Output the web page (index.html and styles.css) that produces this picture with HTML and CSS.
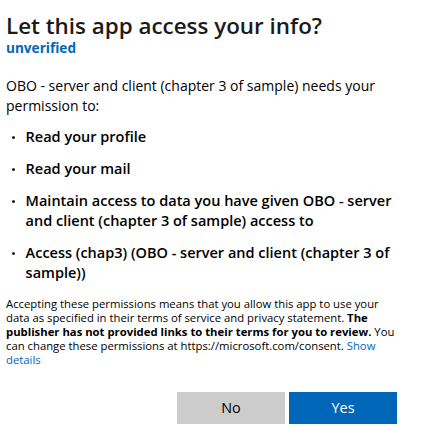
FILE: index.html
```html
<!DOCTYPE html>
<html lang="en">
<head>
<meta charset="utf-8">
<title>Permissions requested</title>
<link rel="stylesheet" href="styles.css">
</head>
<body>
<main class="consent">
  <header class="consent-head">
    <h1 class="title">Let this app access your info?</h1>
    <div class="badge">unverified</div>
  </header>
  <p class="intro">OBO - server and client (chapter 3 of sample) needs your permission to:</p>
  <ul class="scopes">
    <li class="scope">Read your profile</li>
    <li class="scope">Read your mail</li>
    <li class="scope">Maintain access to data you have given OBO - server and client (chapter 3 of sample) access to</li>
    <li class="scope">Access (chap3) (OBO - server and client (chapter 3 of sample))</li>
  </ul>
  <p class="legal">Accepting these permissions means that you allow this app to use your data as specified in their terms of service and privacy statement. <strong>The publisher has not provided links to their terms for you to review.</strong> You can change these permissions at https://microsoft.com/consent. <a class="link" href="#">Show details</a></p>
  <div class="actions">
    <button class="btn btn-secondary" type="button">No</button>
    <button class="btn btn-primary" type="button">Yes</button>
  </div>
</main>
</body>
</html>
```
FILE: styles.css
```css
html, body {
  margin: 0;
  padding: 0;
  background: #ffffff;
}
body {
  font-family: "Open Sans", "Noto Sans", sans-serif;
  color: #1b1b1b;
}
.consent {
  width: 391px;
  padding: 13.3px 0 0 6px;
}
.consent-head {
  display: flex;
  flex-direction: column;
}
.title {
  margin: 0;
  font-size: 22.4px;
  font-weight: 600;
  line-height: 26px;
  color: #1b1b1b;
}
.badge {
  font-size: 13.6px;
  font-weight: 700;
  line-height: 18px;
  color: #0067b8;
}
.intro {
  margin: 19px 0 0;
  font-size: 14px;
  line-height: 20px;
  color: #000000;
}
.scopes {
  list-style: none;
  margin: 10.8px 0 0;
  padding: 0;
  display: flex;
  flex-direction: column;
  gap: 12px;
}
.scope {
  display: flex;
  align-items: flex-start;
  font-size: 14.5px;
  font-weight: 600;
  line-height: 20px;
  color: #000000;
}
.scope::before {
  content: "";
  flex: none;
  width: 3px;
  height: 3px;
  margin: 8.6px 10.6px 0 6px;
  border-radius: 50%;
  background: #1b1b1b;
}
.legal {
  margin: 13.7px 0 0;
  font-size: 11.3px;
  line-height: 14px;
  color: #000000;
}
.legal strong {
  font-weight: 700;
}
.link {
  color: #0067b8;
  text-decoration: none;
}
.actions {
  display: flex;
  justify-content: flex-end;
  gap: 4px;
  margin-top: 24.8px;
}
.btn {
  width: 108px;
  height: 32px;
  border: none;
  border-radius: 0;
  padding: 0;
  font-family: "Open Sans", "Noto Sans", sans-serif;
  font-size: 14.4px;
  line-height: 32px;
}
.btn-secondary {
  background: #cccccc;
  color: #000000;
}
.btn-primary {
  background: #0067b8;
  color: #ffffff;
}
```
